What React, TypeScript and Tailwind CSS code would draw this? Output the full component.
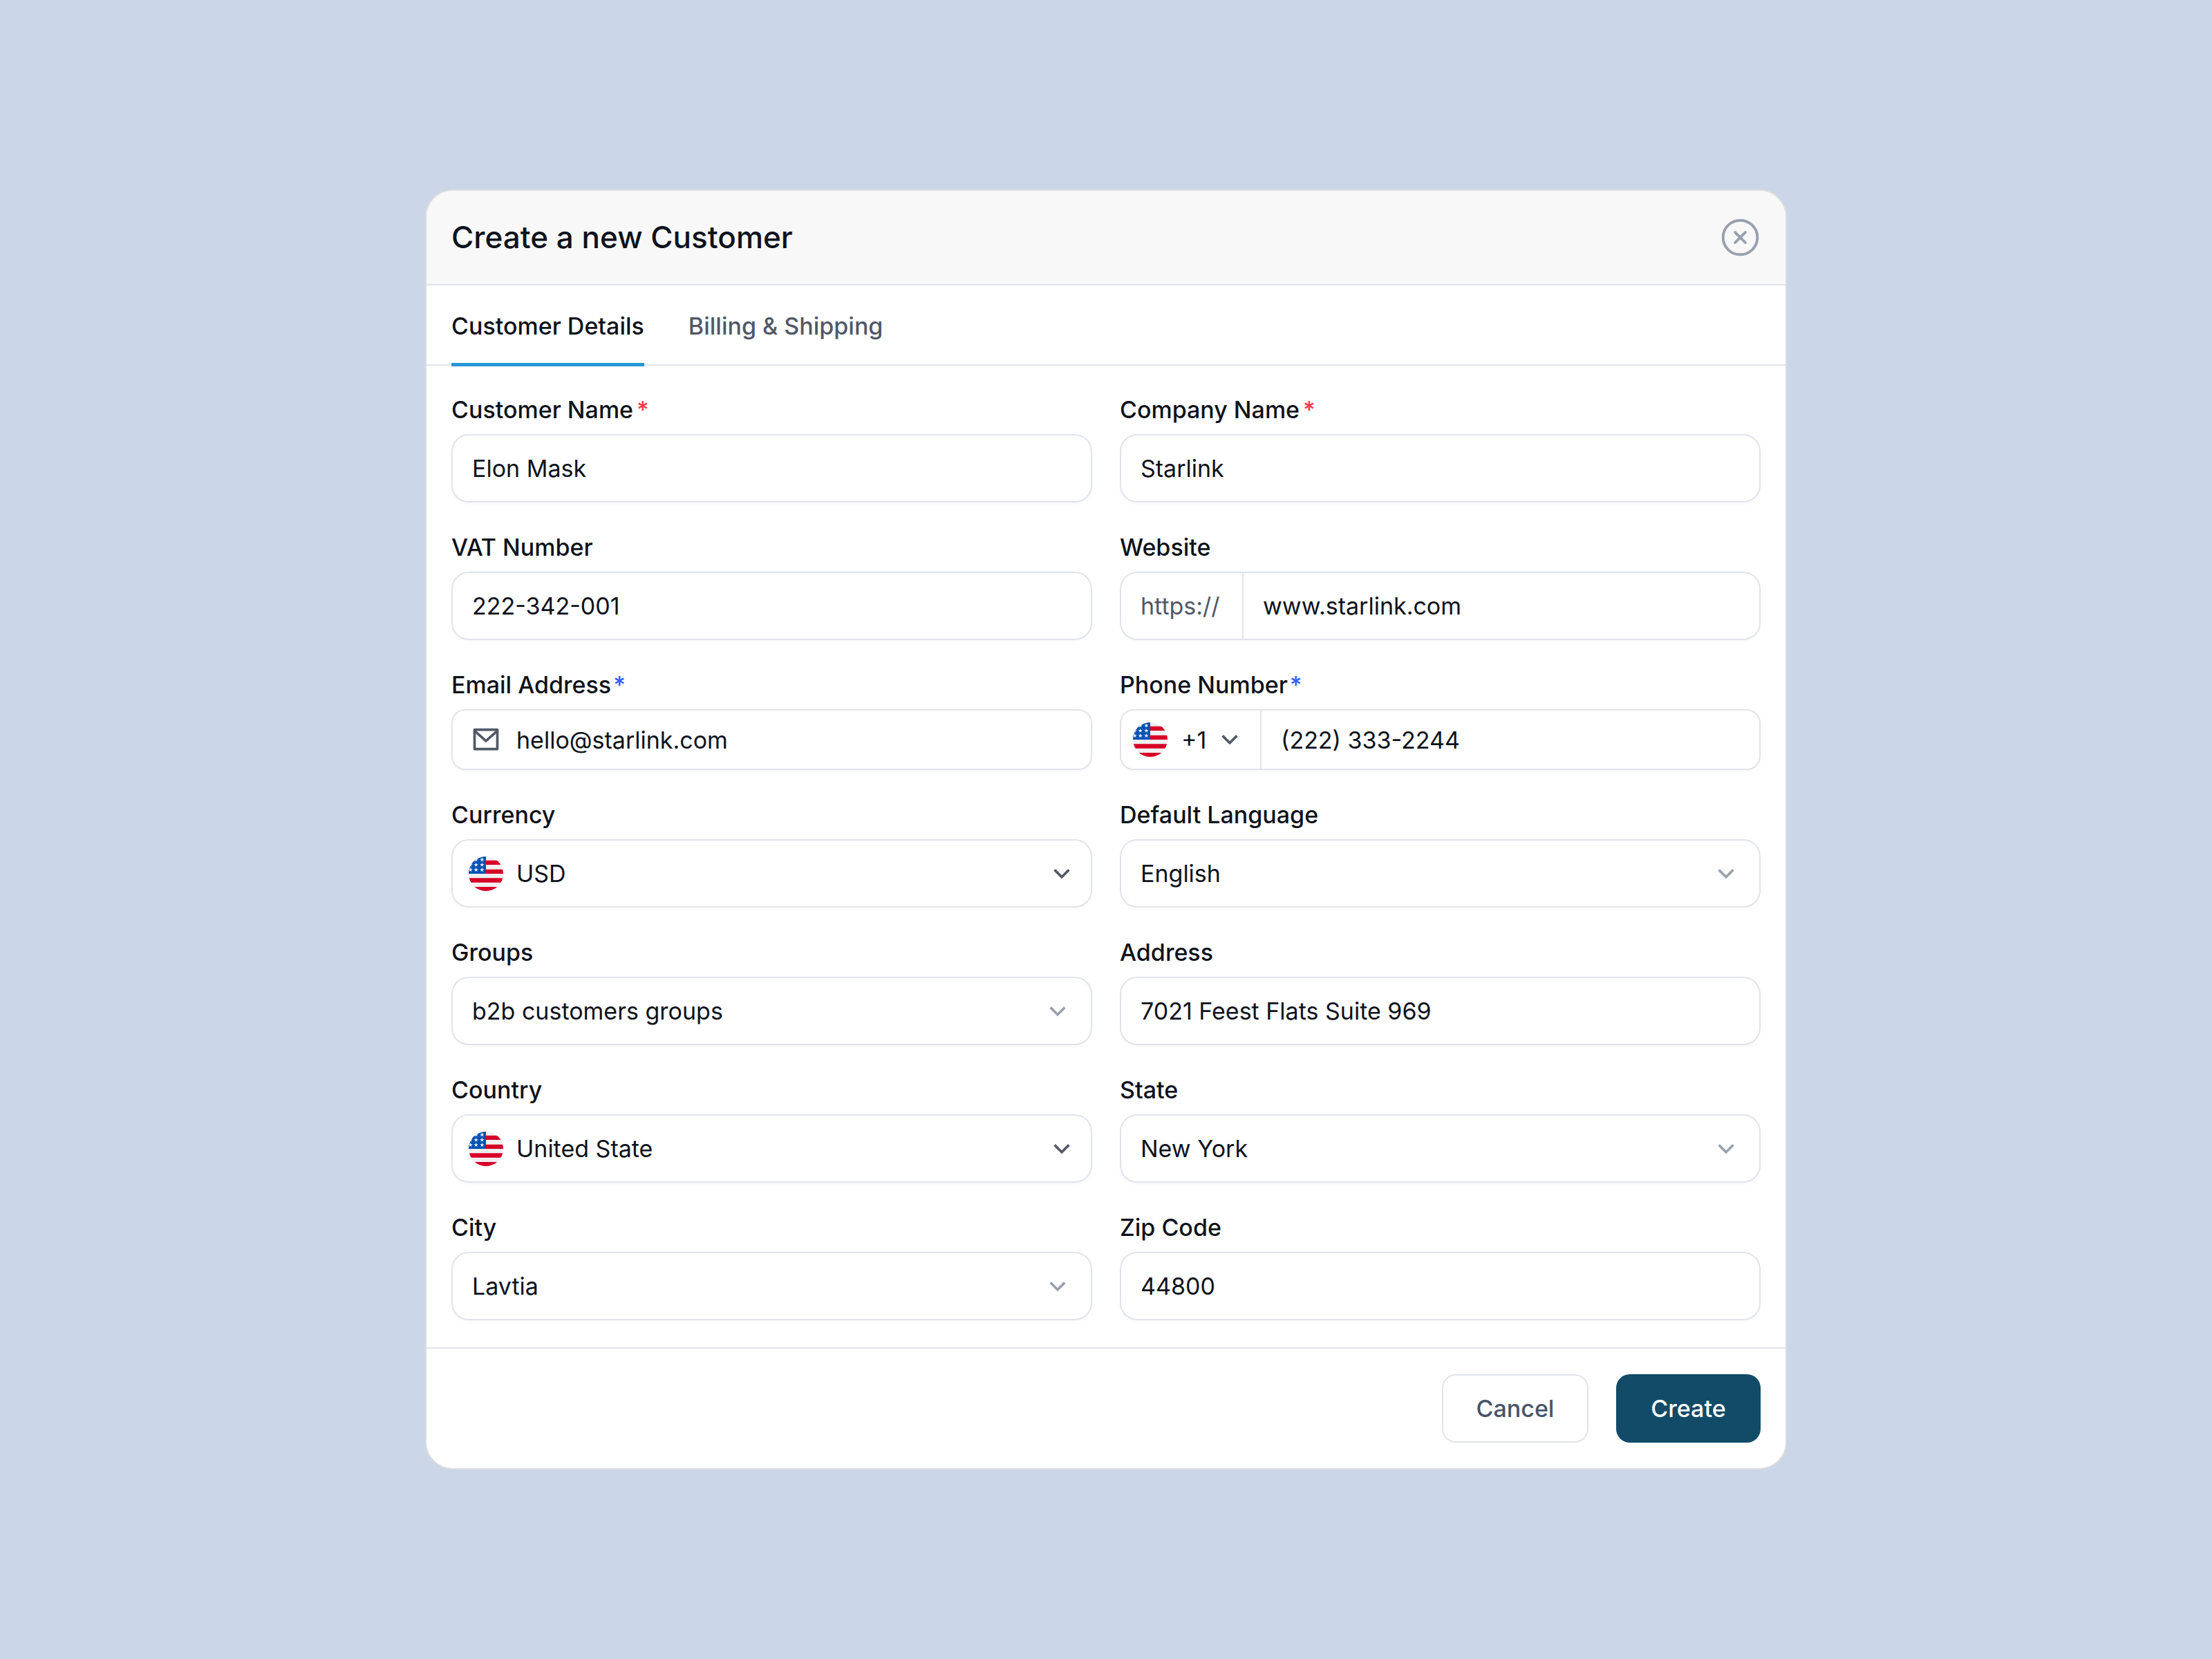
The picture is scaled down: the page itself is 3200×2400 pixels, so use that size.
import { ReactNode, useState } from "react";
import { clsx } from "clsx";

type Star = "red" | "blue";

interface FieldProps {
  id: string;
  label: string;
  star?: Star;
  children: ReactNode;
}

interface TextInputProps {
  id: string;
  type?: string;
  defaultValue: string;
  className?: string;
}

interface SelectFieldProps {
  id: string;
  label: string;
  options: string[];
  flag?: boolean;
}

const TABS = ["Customer Details", "Billing & Shipping"];

const STAR_POSITIONS = [
  [32, 14],
  [58, 14],
  [8, 36],
  [32, 36],
  [58, 36],
  [8, 58],
  [32, 58],
  [58, 58],
];

function ChevronIcon({ className }: { className?: string }) {
  return (
    <svg
      viewBox="0 0 24 24"
      fill="currentColor"
      aria-hidden="true"
      className={clsx("size-11 shrink-0 pointer-events-none", className)}
    >
      <path d="M12 13.17 16.95 8.22 18.36 9.64 12 16 5.64 9.64 7.05 8.22Z" />
    </svg>
  );
}

function CloseIcon() {
  return (
    <svg
      viewBox="0 0 24 24"
      fill="none"
      stroke="currentColor"
      strokeWidth="1.6"
      strokeLinecap="round"
      aria-hidden="true"
      className="size-[59px]"
    >
      <circle cx="12" cy="12" r="10.1" />
      <path d="M9 9l6 6M15 9l-6 6" />
    </svg>
  );
}

function MailIcon({ className }: { className?: string }) {
  return (
    <svg
      viewBox="0 0 24 24"
      fill="none"
      stroke="currentColor"
      strokeWidth="2"
      strokeLinejoin="round"
      aria-hidden="true"
      className={clsx("size-11 shrink-0 pointer-events-none", className)}
    >
      <rect x="3" y="4.2" width="18" height="15.2" />
      <path d="M3.2 5.2 12 13 20.8 5.2" strokeLinejoin="miter" />
    </svg>
  );
}

function FlagIcon({ id, className }: { id: string; className?: string }) {
  return (
    <svg
      viewBox="0 0 150 150"
      aria-hidden="true"
      className={clsx("size-[50px] shrink-0 pointer-events-none", className)}
    >
      <clipPath id={id}>
        <circle cx="75" cy="75" r="75" />
      </clipPath>
      <g clipPath={`url(#${id})`}>
        <rect width="150" height="150" fill="#f0f0f0" />
        <path d="M0 17h150v19H0zM0 56h150v19H0zM0 94h150v19H0zM0 132h150v18H0z" fill="#d80027" />
        <rect width="75" height="75" fill="#0052b4" />
        {STAR_POSITIONS.map(([x, y]) => (
          <path
            key={`${x}-${y}`}
            transform={`translate(${x} ${y})`}
            d="M0-10 2.3-3.2 9.5-3.1 3.8 1.2 5.9 8.1 0 4-5.9 8.1-3.8 1.2-9.5-3.1-2.3-3.2Z"
            fill="#f0f0f0"
          />
        ))}
      </g>
    </svg>
  );
}

function Field({ id, label, star, children }: FieldProps) {
  return (
    <div className="flex min-w-0 flex-col gap-2.5">
      <label htmlFor={id} className="text-[34px] leading-[50px] font-medium">
        {label}
        {star === "red" && <span className="ml-[5px] text-[#fb3748]">*</span>}
        {star === "blue" && <span className="ml-[3px] text-[#335cff]">*</span>}
      </label>
      {children}
    </div>
  );
}

function Box({ small, children }: { small?: boolean; children: ReactNode }) {
  return (
    <div
      className={clsx(
        "flex overflow-hidden border-2 border-[#e1e4ea] bg-white shadow-[0_2px_5px_rgba(10,13,20,0.03)]",
        small ? "h-[88px] rounded-[20px]" : "h-[99px] rounded-[25px]"
      )}
    >
      {children}
    </div>
  );
}

function TextInput({ id, type = "text", defaultValue, className = "px-7" }: TextInputProps) {
  return (
    <input
      id={id}
      type={type}
      defaultValue={defaultValue}
      className={clsx("h-full w-full min-w-0 flex-1 bg-transparent text-[34px] outline-none", className)}
    />
  );
}

function SelectField({ id, label, options, flag }: SelectFieldProps) {
  return (
    <Field id={id} label={label}>
      <Box>
        <div className="grid flex-1 items-center">
          <select
            id={id}
            className={clsx(
              "col-start-1 row-start-1 h-full w-full appearance-none bg-transparent pr-20 text-[34px] outline-none",
              flag ? "pl-[92px]" : "pl-7"
            )}
          >
            {options.map((o) => (
              <option key={o}>{o}</option>
            ))}
          </select>
          {flag && <FlagIcon id={`${id}-flag`} className="col-start-1 row-start-1 ml-[23px]" />}
          <ChevronIcon
            className={clsx(
              "col-start-1 row-start-1 justify-self-end",
              flag ? "mr-5 text-[#525866]" : "mr-[26px] text-[#99a0ae]"
            )}
          />
        </div>
      </Box>
    </Field>
  );
}

export default function App() {
  const [tab, setTab] = useState(TABS[0]);

  return (
    <main className="flex min-h-screen items-center justify-center bg-[#cbd6e8] font-[Inter,sans-serif] text-[#0e121b]">
      <form
        onSubmit={(e) => e.preventDefault()}
        className="w-full max-w-[1970px] overflow-hidden rounded-[40px] border-2 border-[#dedede] bg-white"
      >
        {/* Header */}
        <header className="flex items-center justify-between border-b-2 border-[#e1e4ea] bg-[#f8f8f8] px-9 py-[38px]">
          <h1 className="text-[44px] leading-[59px] font-medium">Create a new Customer</h1>
          <button type="button" aria-label="Close" className="text-[#99a0ae]">
            <CloseIcon />
          </button>
        </header>

        {/* Tabs */}
        <nav className="flex gap-16 border-b-2 border-[#e1e4ea] px-9">
          {TABS.map((t) => (
            <button
              key={t}
              type="button"
              onClick={() => setTab(t)}
              className={clsx(
                "-mb-[3px] h-[117px] border-b-[5px] pt-1 text-[34px] font-medium",
                t === tab ? "border-[#2397d4]" : "border-transparent text-[#525866]"
              )}
            >
              {t}
            </button>
          ))}
        </nav>

        {/* Fields */}
        <div className="grid grid-cols-2 gap-10 px-9 py-[39px]">
          <Field id="name" label="Customer Name" star="red">
            <Box>
              <TextInput id="name" defaultValue="Elon Mask" />
            </Box>
          </Field>
          <Field id="company" label="Company Name" star="red">
            <Box>
              <TextInput id="company" defaultValue="Starlink" />
            </Box>
          </Field>

          <Field id="vat" label="VAT Number">
            <Box>
              <TextInput id="vat" defaultValue="222-342-001" />
            </Box>
          </Field>
          <Field id="website" label="Website">
            <Box>
              <span className="flex w-[177px] items-center border-r-2 border-[#e1e4ea] pl-7 text-[34px] text-[#525866]">
                https://
              </span>
              <TextInput id="website" defaultValue="www.starlink.com" />
            </Box>
          </Field>

          <Field id="email" label="Email Address" star="blue">
            <Box small>
              <div className="grid flex-1 items-center">
                <MailIcon className="col-start-1 row-start-1 ml-[26px] text-[#525866]" />
                <TextInput
                  id="email"
                  type="email"
                  defaultValue="hello@starlink.com"
                  className="col-start-1 row-start-1 pr-7 pl-[92px]"
                />
              </div>
            </Box>
          </Field>
          <Field id="phone" label="Phone Number" star="blue">
            <Box small>
              <div className="grid w-[203px] items-center border-r-2 border-[#e1e4ea]">
                <select
                  aria-label="Country code"
                  className="col-start-1 row-start-1 h-full w-full appearance-none bg-transparent pl-[87px] text-[34px] outline-none"
                >
                  <option>+1</option>
                </select>
                <FlagIcon id="phone-flag" className="col-start-1 row-start-1 ml-[17px]" />
                <ChevronIcon className="col-start-1 row-start-1 mr-[22px] justify-self-end text-[#525866]" />
              </div>
              <TextInput id="phone" type="tel" defaultValue="(222) 333-2244" />
            </Box>
          </Field>

          <SelectField id="currency" label="Currency" options={["USD"]} flag />
          <SelectField id="language" label="Default Language" options={["English"]} />

          <SelectField id="groups" label="Groups" options={["b2b customers groups"]} />
          <Field id="address" label="Address">
            <Box>
              <TextInput id="address" defaultValue="7021 Feest Flats Suite 969" />
            </Box>
          </Field>

          <SelectField id="country" label="Country" options={["United State"]} flag />
          <SelectField id="state" label="State" options={["New York"]} />

          <SelectField id="city" label="City" options={["Lavtia"]} />
          <Field id="zip" label="Zip Code">
            <Box>
              <TextInput id="zip" defaultValue="44800" />
            </Box>
          </Field>
        </div>

        {/* Actions */}
        <footer className="flex justify-end gap-10 border-t-2 border-[#e1e4ea] px-9 py-[37px]">
          <button
            type="button"
            className="h-[99px] w-[212px] rounded-[20px] border-2 border-[#e1e4ea] text-[34px] font-medium text-[#475467]"
          >
            Cancel
          </button>
          <button
            type="submit"
            className="h-[99px] w-[209px] rounded-[20px] bg-[#124b68] text-[34px] font-medium text-white"
          >
            Create
          </button>
        </footer>
      </form>
    </main>
  );
}
